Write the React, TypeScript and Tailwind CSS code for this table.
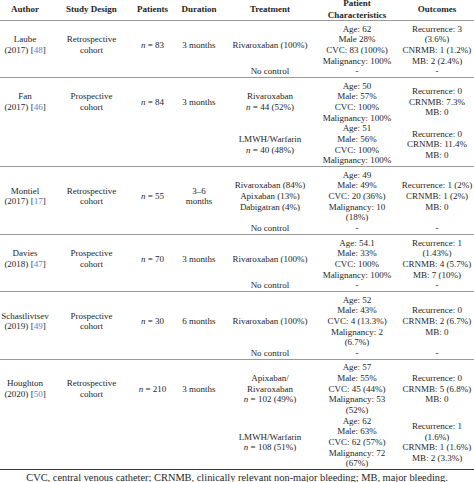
import React from "react";

type Sub = { treat: string[]; pc: string[]; out: string[] };
type Study = {
  author: string;
  year: string;
  refNo: string;
  design: string[];
  n: string;
  duration: string[];
  subs: Sub[];
};

const noControl: Sub = { treat: ["No control"], pc: ["-"], out: ["-"] };

const studies: Study[] = [
  {
    author: "Laube",
    year: "(2017)",
    refNo: "48",
    design: ["Retrospective", "cohort"],
    n: "83",
    duration: ["3 months"],
    subs: [
      {
        treat: ["Rivaroxaban (100%)"],
        pc: ["Age: 62", "Male 28%", "CVC: 83 (100%)", "Malignancy: 100%"],
        out: ["Recurrence: 3", "(3.6%)", "CNRMB: 1 (1.2%)", "MB: 2 (2.4%)"],
      },
      noControl,
    ],
  },
  {
    author: "Fan",
    year: "(2017)",
    refNo: "46",
    design: ["Prospective", "cohort"],
    n: "84",
    duration: ["3 months"],
    subs: [
      {
        treat: ["Rivaroxaban", "n = 44 (52%)"],
        pc: ["Age: 50", "Male: 57%", "CVC: 100%", "Malignancy: 100%"],
        out: ["Recurrence: 0", "CRNMB: 7.3%", "MB: 0"],
      },
      {
        treat: ["LMWH/Warfarin", "n = 40 (48%)"],
        pc: ["Age: 51", "Male: 56%", "CVC: 100%", "Malignancy: 100%"],
        out: ["Recurrence: 0", "CRNMB: 11.4%", "MB: 0"],
      },
    ],
  },
  {
    author: "Montiel",
    year: "(2017)",
    refNo: "17",
    design: ["Retrospective", "cohort"],
    n: "55",
    duration: ["3–6", "months"],
    subs: [
      {
        treat: ["Rivaroxaban (84%)", "Apixaban (13%)", "Dabigatran (4%)"],
        pc: ["Age: 49", "Male: 49%", "CVC: 20 (36%)", "Malignancy: 10", "(18%)"],
        out: ["Recurrence: 1 (2%)", "CRNMB: 1 (2%)", "MB: 0"],
      },
      noControl,
    ],
  },
  {
    author: "Davies",
    year: "(2018)",
    refNo: "47",
    design: ["Prospective", "cohort"],
    n: "70",
    duration: ["3 months"],
    subs: [
      {
        treat: ["Rivaroxaban (100%)"],
        pc: ["Age: 54.1", "Male: 33%", "CVC: 100%", "Malignancy: 100%"],
        out: ["Recurrence: 1", "(1.43%)", "CRNMB: 4 (5.7%)", "MB: 7 (10%)"],
      },
      noControl,
    ],
  },
  {
    author: "Schastlivtsev",
    year: "(2019)",
    refNo: "49",
    design: ["Prospective", "cohort"],
    n: "30",
    duration: ["6 months"],
    subs: [
      {
        treat: ["Rivaroxaban (100%)"],
        pc: ["Age: 52", "Male: 43%", "CVC: 4 (13.3%)", "Malignancy: 2", "(6.7%)"],
        out: ["Recurrence: 0", "CRNMB: 2 (6.7%)", "MB: 0"],
      },
      noControl,
    ],
  },
  {
    author: "Houghton",
    year: "(2020)",
    refNo: "50",
    design: ["Retrospective", "cohort"],
    n: "210",
    duration: ["3 months"],
    subs: [
      {
        treat: ["Apixaban/", "Rivaroxaban", "n = 102 (49%)"],
        pc: ["Age: 57", "Male: 55%", "CVC: 45 (44%)", "Malignancy: 53", "(52%)"],
        out: ["Recurrence: 0", "CRNMB: 5 (6.8%)", "MB: 0"],
      },
      {
        treat: ["LMWH/Warfarin", "n = 108 (51%)"],
        pc: ["Age: 62", "Male: 63%", "CVC: 62 (57%)", "Malignancy: 72", "(67%)"],
        out: ["Recurrence: 1", "(1.6%)", "CRNMB: 1 (1.6%)", "MB: 2 (3.3%)"],
      },
    ],
  },
];

const cols = "grid grid-cols-[50px_83px_39px_54px_88px_86px_74px]";

function Line({ text }: { text: string }) {
  if (text.startsWith("n = ")) {
    return (
      <div>
        <i>n</i>
        {text.slice(1)}
      </div>
    );
  }
  return <div>{text}</div>;
}

function Lines({ items }: { items: string[] }) {
  return (
    <>
      {items.map((t, i) => (
        <Line key={i} text={t} />
      ))}
    </>
  );
}

function StudyBlock({ s, last }: { s: Study; last: boolean }) {
  return (
    <div
      className={`${cols} items-center text-center pt-[2.7px] ${
        last ? "border-b-[1.5px] border-[#3a3a3a]" : "border-b border-[#9a9a9a]"
      }`}
    >
      <div className="col-start-1 row-start-1 whitespace-nowrap">
        <div>{s.author}</div>
        <div>
          {s.year} [<span className="text-[#4a85d6]">{s.refNo}</span>]
        </div>
      </div>
      <div className="col-start-2 row-start-1">
        <Lines items={s.design} />
      </div>
      <div className="col-start-3 row-start-1">
        <i>n</i> = {s.n}
      </div>
      <div className="col-start-4 row-start-1">
        <Lines items={s.duration} />
      </div>
      {s.subs.map((sub, i) => (
        <React.Fragment key={i}>
          <div className={`col-start-5 ${i === 0 ? "row-start-1" : "row-start-2"}`}>
            <Lines items={sub.treat} />
          </div>
          <div className={`col-start-6 ${i === 0 ? "row-start-1" : "row-start-2"}`}>
            <Lines items={sub.pc} />
          </div>
          <div
            className={`col-start-7 whitespace-nowrap ${i === 0 ? "row-start-1" : "row-start-2"}`}
          >
            <Lines items={sub.out} />
          </div>
        </React.Fragment>
      ))}
    </div>
  );
}

export default function App() {
  return (
    <div className="w-[474px] h-[482px] overflow-hidden bg-white text-[#262626] font-['Liberation_Serif',serif] text-[9px] leading-[10.67px]">
      <div
        className={`${cols} items-center text-center font-bold -mt-[3px] h-[24px] border-b border-[#9a9a9a] leading-[12px]`}
      >
        <div>Author</div>
        <div>Study Design</div>
        <div>Patients</div>
        <div>Duration</div>
        <div>Treatment</div>
        <div>
          <div>Patient</div>
          <div>Characteristics</div>
        </div>
        <div>Outcomes</div>
      </div>
      {studies.map((s, i) => (
        <StudyBlock key={s.author} s={s} last={i === studies.length - 1} />
      ))}
      <div className="mt-[2px] text-center text-[10.4px] leading-[11px]">
        CVC, central venous catheter; CRNMB, clinically relevant non-major bleeding; MB, major
        bleeding.
      </div>
    </div>
  );
}
